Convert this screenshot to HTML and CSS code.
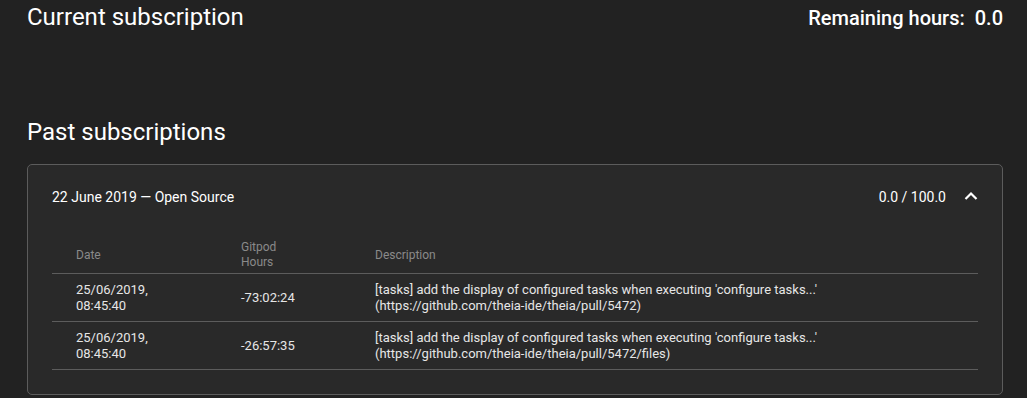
FILE: index.html
```html
<!DOCTYPE html>
<html lang="en">

<head>
    <meta charset="UTF-8">
    <meta name="viewport" content="width=device-width, initial-scale=1.0">
    <title>Subscriptions</title>
    <link rel="stylesheet" href="styles.css">
</head>

<body>
    <div class="page">
        <div class="current">
            <h1>Current subscription</h1>
            <div class="remaining">Remaining hours:&nbsp; 0.0</div>
        </div>

        <h1 class="past-title">Past subscriptions</h1>

        <div class="panel">
            <div class="panel-header">
                <span class="panel-title">22 June 2019 &mdash; Open Source</span>
                <span class="panel-hours">0.0 / 100.0</span>
                <svg class="chevron" width="14" height="9" viewBox="0 0 14 9">
                    <polyline points="1.5,8 7,2.5 12.5,8" fill="none" stroke="#fff" stroke-width="2.2"/>
                </svg>
            </div>
            <div class="panel-body">
                <table class="usage">
                    <thead>
                        <tr>
                            <th class="col-date">Date</th>
                            <th class="col-hours">Gitpod<br>Hours</th>
                            <th>Description</th>
                        </tr>
                    </thead>
                    <tbody>
                        <tr>
                            <td>25/06/2019,<br>08:45:40</td>
                            <td>-73:02:24</td>
                            <td>[tasks] add the display of configured tasks when executing 'configure tasks...' (https://github.com/theia-ide/theia/pull/5472)</td>
                        </tr>
                        <tr>
                            <td>25/06/2019,<br>08:45:40</td>
                            <td>-26:57:35</td>
                            <td>[tasks] add the display of configured tasks when executing 'configure tasks...' (https://github.com/theia-ide/theia/pull/5472/files)</td>
                        </tr>
                    </tbody>
                </table>
            </div>
        </div>
    </div>
</body>

</html>
```

FILE: styles.css
```css
body {
    margin: 0;
    background-color: #222222;
    color: #ffffff;
    font-family: Roboto, "Noto Sans", sans-serif;
    height: 398px;
    overflow: hidden;
}

.page {
    padding: 1px 24px 0 27px;
}

h1 {
    margin: 0;
    font-size: 24px;
    font-weight: 400;
    line-height: 32px;
}

.current {
    display: flex;
    justify-content: space-between;
    align-items: baseline;
}

.remaining {
    font-size: 20px;
    font-weight: 500;
}

.past-title {
    margin-top: 83px;
    margin-bottom: 16px;
}

.panel {
    background: #292929;
    border: 1px solid #5c5c5c;
    border-radius: 5px;
}

.panel-header {
    display: flex;
    align-items: center;
    height: 64px;
    padding: 0 24px;
    font-size: 14px;
}

.panel-title {
    flex: 1;
}

.chevron {
    margin-left: 18px;
    margin-top: -3px;
}

.panel-body {
    padding: 0 24px 24px 24px;
}

.usage {
    width: 100%;
    border-collapse: collapse;
}

.usage th {
    text-align: left;
    font-size: 12px;
    font-weight: 400;
    line-height: 15px;
    color: #8a8a8a;
    height: 36px;
    padding: 8px 24px 0 24px;
    border-bottom: 1px solid #5c5c5c;
}

.usage td {
    font-size: 13px;
    line-height: 16px;
    color: #e6e6e6;
    height: 47px;
    padding: 0 24px;
    border-bottom: 1px solid #5c5c5c;
}

.col-date {
    width: 117px;
}

.col-hours {
    width: 86px;
}
```
